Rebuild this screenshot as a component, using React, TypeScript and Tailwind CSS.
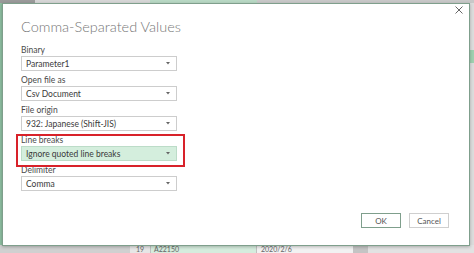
import React from "react";

function Caret() {
  return (
    <svg width="4" height="3" viewBox="0 0 4 3" className="shrink-0">
      <path d="M0 0 L4 0 L2 2.5 Z" fill="#666" />
    </svg>
  );
}

function Field({ label, value, active }: { label: string; value: string; active?: boolean }) {
  return (
    <div className="flex flex-col">
      <div className="h-[15px] flex items-end pb-[1px] text-[8.5px] leading-[10px] text-[#4a4a4a]">{label}</div>
      <div
        className={
          "w-[156px] h-[15px] flex items-center justify-between pl-[4px] pr-[6px] border text-[8.5px] text-[#3a3a3a] " +
          (active ? "bg-[#d4eedd] border-[#bcdcc8]" : "bg-white border-[#cdcdcd]")
        }
      >
        <span className="leading-[10px]">{value}</span>
        <Caret />
      </div>
    </div>
  );
}

export default function App() {
  return (
    <div
      className="relative w-[474px] h-[253px] overflow-hidden bg-[#dcdcdc]"
      style={{ fontFamily: 'Lato, "Open Sans", sans-serif' }}
    >
      {/* background spreadsheet fragments */}
      <div className="absolute left-0 top-0 w-[474px] h-[3px] flex">
        <div className="w-[35px] h-full bg-[#9a9a9a]" />
        <div className="w-[115px] h-full bg-[#d6d6d6]" />
        <div className="w-[107px] h-full bg-[#b8d8c4]" />
        <div className="flex-1 h-full bg-[#c8c8c8]" />
      </div>
      <div className="absolute left-0 top-[3px] w-[3px] h-[242px] bg-[#8fc0a2]" />
      <div className="absolute left-[470px] top-[50px] w-[4px] h-[13px] bg-[#9fd0b0]" />
      <div className="absolute left-0 top-[245px] w-[474px] h-[8px] flex text-[7px] leading-[8px] text-[#666]">
        <div className="w-[130px] h-full bg-[#d0d0d0]" />
        <div className="w-[20px] h-full bg-[#e6e6e6] pl-[6px]">19</div>
        <div className="w-[106px] h-full bg-[#d5ecdd] pl-[3px] border-l border-[#c0c0c0]">A22150</div>
        <div className="w-[97px] h-full bg-[#f2f2f2] pl-[4px] border-l border-[#c0c0c0]">2020/2/6</div>
        <div className="w-[15px] h-full bg-[#c4c4c4]" />
        <div className="flex-1 h-full bg-[#e2e2e2]" />
      </div>

      {/* dialog */}
      <div className="absolute left-[2px] top-[3px] w-[468px] h-[243px] bg-white border border-[#7f9f8c] shadow-[0_1px_3px_rgba(0,0,0,0.25)] flex flex-col">
        <div className="flex justify-end pr-[6px] pt-[2px] h-[14px]">
          <svg width="8" height="8" viewBox="0 0 8 8">
            <path d="M0.5 0.5 L7.5 7.5 M7.5 0.5 L0.5 7.5" stroke="#666" strokeWidth="1" />
          </svg>
        </div>
        <div className="pl-[18px] h-[23px] text-[14.5px] leading-[18px] font-light text-[#777]">
          Comma-Separated Values
        </div>
        <div className="pl-[18px] flex flex-col">
          <Field label="Binary" value="Parameter1" />
          <Field label="Open file as" value="Csv Document" />
          <Field label="File origin" value="932: Japanese (Shift-JIS)" />
          <div className="relative">
            <Field label="Line breaks" value="Ignore quoted line breaks" active />
            <div className="absolute left-[-5px] top-[3px] w-[169px] h-[33px] border-2 border-[#d8222a]" />
          </div>
          <Field label="Delimiter" value="Comma" />
        </div>
        <div className="flex-1" />
        <div className="flex justify-end gap-[8px] pr-[20px] pb-[17px]">
          <button className="w-[40px] h-[15px] border border-[#7f9f8c] bg-white text-[8px] text-[#555] leading-[10px]">
            OK
          </button>
          <button className="w-[40px] h-[15px] border border-[#cfcfcf] bg-white text-[8px] text-[#555] leading-[10px]">
            Cancel
          </button>
        </div>
      </div>
    </div>
  );
}
